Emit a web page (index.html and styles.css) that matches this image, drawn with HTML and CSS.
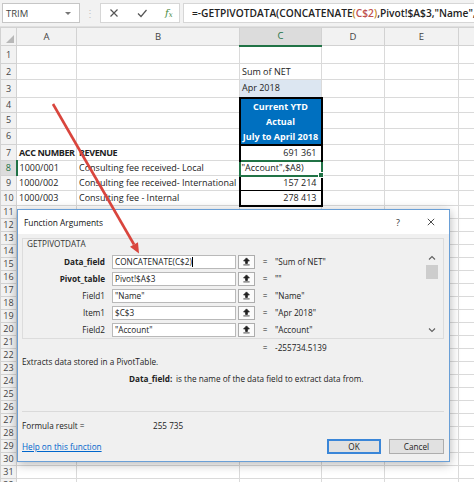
FILE: index.html
```html
<!DOCTYPE html>
<html lang="en">
<head>
  <meta charset="UTF-8" />
  <title>Function Arguments</title>
  <link rel="stylesheet" href="styles.css">
</head>
<body>
<div class="app">

  <!-- Formula bar -->
  <div class="formula-bar">
    <div class="name-box"><span>TRIM</span><span class="caret"></span></div>
    <div class="grip">⋮</div>
    <div class="fx-buttons">
      <svg class="btn-icon" viewBox="0 0 10 10"><path d="M1.5 1.5 L8.5 8.5 M8.5 1.5 L1.5 8.5"/></svg>
      <svg class="btn-icon" viewBox="0 0 10 10"><path d="M1 5.5 L4 8.5 L9.5 2"/></svg>
      <span class="fx">f<sub>x</sub></span>
    </div>
    <div class="formula">=-GETPIVOTDATA(CONCATENATE<span class="paren">(</span><span class="ref">C$2</span><span class="paren">)</span>,Pivot!$A$3,"Name",$C$3,"Account",$A8)</div>
  </div>

  <!-- Sheet -->
  <table class="sheet">
    <colgroup>
      <col class="c-rh"><col class="c-a"><col class="c-b"><col class="c-c"><col class="c-d"><col class="c-e"><col class="c-f">
    </colgroup>
    <tr class="head"><th class="corner"></th><th>A</th><th>B</th><th class="sel">C</th><th>D</th><th>E</th><th></th></tr>
    <tr class="h18"><th>1</th><td></td><td></td><td></td><td></td><td></td><td></td></tr>
    <tr class="h16"><th>2</th><td></td><td></td><td>Sum of NET</td><td></td><td></td><td></td></tr>
    <tr class="h18"><th>3</th><td></td><td></td><td class="period">Apr 2018</td><td></td><td></td><td></td></tr>
    <tr class="h15"><th>4</th><td></td><td></td><td class="title-cell" rowspan="3">Current YTD<br>Actual<br>July to April 2018</td><td></td><td></td><td></td></tr>
    <tr class="h15"><th>5</th><td></td><td></td><td></td><td></td><td></td></tr>
    <tr class="h16"><th>6</th><td></td><td></td><td></td><td></td><td></td></tr>
    <tr class="h16"><th>7</th><td class="bold">ACC NUMBER</td><td class="bold">REVENUE</td><td class="box num">691 361</td><td></td><td></td><td></td></tr>
    <tr class="h15"><th class="sel-row">8</th><td>1000/001</td><td>Consulting fee received- Local</td><td class="editing">"Account",$A8)</td><td></td><td></td><td></td></tr>
    <tr class="h15"><th>9</th><td>1000/002</td><td>Consulting fee received- International</td><td class="box num">157 214</td><td></td><td></td><td></td></tr>
    <tr class="h15"><th>10</th><td>1000/003</td><td>Consulting fee - Internal</td><td class="box box-end num">278 413</td><td></td><td></td><td></td></tr>
    <tr class="lo"><th>11</th><td></td><td></td><td></td><td></td><td></td><td></td></tr>
    <tr class="lo"><th>12</th><td></td><td></td><td></td><td></td><td></td><td></td></tr>
    <tr class="lo"><th>13</th><td></td><td></td><td></td><td></td><td></td><td></td></tr>
    <tr class="lo"><th>14</th><td></td><td></td><td></td><td></td><td></td><td></td></tr>
    <tr class="lo"><th>15</th><td></td><td></td><td></td><td></td><td></td><td></td></tr>
    <tr class="lo"><th>16</th><td></td><td></td><td></td><td></td><td></td><td></td></tr>
    <tr class="lo"><th>17</th><td></td><td></td><td></td><td></td><td></td><td></td></tr>
    <tr class="lo"><th>18</th><td></td><td></td><td></td><td></td><td></td><td></td></tr>
    <tr class="lo"><th>19</th><td></td><td></td><td></td><td></td><td></td><td></td></tr>
    <tr class="lo"><th>20</th><td></td><td></td><td></td><td></td><td></td><td></td></tr>
    <tr class="lo"><th>21</th><td></td><td></td><td></td><td></td><td></td><td></td></tr>
    <tr class="lo"><th>22</th><td></td><td></td><td></td><td></td><td></td><td></td></tr>
    <tr class="lo"><th>23</th><td></td><td></td><td></td><td></td><td></td><td></td></tr>
    <tr class="lo"><th>24</th><td></td><td></td><td></td><td></td><td></td><td></td></tr>
    <tr class="lo"><th>25</th><td></td><td></td><td></td><td></td><td></td><td></td></tr>
    <tr class="lo"><th>26</th><td></td><td></td><td></td><td></td><td></td><td></td></tr>
    <tr class="lo"><th>27</th><td></td><td></td><td></td><td></td><td></td><td></td></tr>
    <tr class="lo"><th>28</th><td></td><td></td><td></td><td></td><td></td><td></td></tr>
    <tr class="lo"><th>29</th><td></td><td></td><td></td><td></td><td></td><td></td></tr>
    <tr class="lo"><th>30</th><td></td><td></td><td></td><td></td><td></td><td></td></tr>
    <tr class="lo"><th>31</th><td></td><td></td><td></td><td></td><td></td><td></td></tr>
    <tr class="lo"><th class="last">32</th><td></td><td></td><td></td><td></td><td></td><td></td></tr>
  </table>

  <!-- Function Arguments dialog -->
  <div class="dialog">
    <div class="dialog-title">
      <span>Function Arguments</span>
      <span class="title-btns">
        <span class="help">?</span>
        <span class="close"><svg viewBox="0 0 10 10"><path d="M1 1 L9 9 M9 1 L1 9"/></svg></span>
      </span>
    </div>
    <div class="dialog-body">
      <div class="group">
        <div class="group-name">GETPIVOTDATA</div>
        <div class="group-main">
          <div class="args">
            <div class="arg">
              <label class="req">Data_field</label>
              <div class="input">CONCATENATE(C$2)<span class="cursor"></span></div>
              <span class="ref-btn"><svg viewBox="0 0 10 10"><path d="M5 1 L1.8 4.4 H4 V7.2 H6 V4.4 H8.2 Z M1.5 8.8 H8.5"/></svg></span>
              <span class="eq">=</span><span class="val">"Sum of NET"</span>
            </div>
            <div class="arg">
              <label class="req">Pivot_table</label>
              <div class="input">Pivot!$A$3</div>
              <span class="ref-btn"><svg viewBox="0 0 10 10"><path d="M5 1 L1.8 4.4 H4 V7.2 H6 V4.4 H8.2 Z M1.5 8.8 H8.5"/></svg></span>
              <span class="eq">=</span><span class="val">""</span>
            </div>
            <div class="arg">
              <label>Field1</label>
              <div class="input">"Name"</div>
              <span class="ref-btn"><svg viewBox="0 0 10 10"><path d="M5 1 L1.8 4.4 H4 V7.2 H6 V4.4 H8.2 Z M1.5 8.8 H8.5"/></svg></span>
              <span class="eq">=</span><span class="val">"Name"</span>
            </div>
            <div class="arg">
              <label>Item1</label>
              <div class="input">$C$3</div>
              <span class="ref-btn"><svg viewBox="0 0 10 10"><path d="M5 1 L1.8 4.4 H4 V7.2 H6 V4.4 H8.2 Z M1.5 8.8 H8.5"/></svg></span>
              <span class="eq">=</span><span class="val">"Apr 2018"</span>
            </div>
            <div class="arg">
              <label>Field2</label>
              <div class="input">"Account"</div>
              <span class="ref-btn"><svg viewBox="0 0 10 10"><path d="M5 1 L1.8 4.4 H4 V7.2 H6 V4.4 H8.2 Z M1.5 8.8 H8.5"/></svg></span>
              <span class="eq">=</span><span class="val">"Account"</span>
            </div>
          </div>
          <div class="scrollbar">
            <svg class="chev" viewBox="0 0 12 10"><path d="M3 6.5 L6 3.5 L9 6.5"/></svg>
            <div class="thumb"></div>
            <svg class="chev down" viewBox="0 0 12 10"><path d="M3 3.5 L6 6.5 L9 3.5"/></svg>
          </div>
        </div>
      </div>

      <div class="result-row"><span class="eq">=</span><span class="val">-255734.5139</span></div>
      <p class="desc">Extracts data stored in a PivotTable.</p>
      <p class="arg-help"><b>Data_field:</b><span>is the name of the data field to extract data from.</span></p>
      <hr>
      <div class="formula-result"><span class="fr-label">Formula result =</span><span>255 735</span></div>
      <div class="footer">
        <a href="#">Help on this function</a>
        <div class="buttons">
          <button class="ok">OK</button>
          <button>Cancel</button>
        </div>
      </div>
    </div>
  </div>

  <!-- Red annotation arrow -->
  <svg class="arrow" viewBox="0 0 474 482">
    <line x1="53" y1="104" x2="134" y2="244.5"/>
    <polygon points="139,253.5 130,246.8 138,242.2"/>
  </svg>

</div>
</body>
</html>
```

FILE: styles.css
```css
* {
  margin: 0;
  padding: 0;
  box-sizing: border-box;
}
body {
  font-family: "Open Sans", "Liberation Sans", sans-serif;
  color: #222;
  background: #fff;
  overflow: hidden;
}
.app {
  position: relative;
  width: 474px;
  height: 482px;
  overflow: hidden;
}

/* Formula bar */
.formula-bar {
  display: flex;
  align-items: flex-start;
  height: 27px;
  padding: 3px 0 0 2px;
  background: #f2f2f2;
  border-bottom: 1px solid #e0e0e0;
}
.name-box {
  display: flex;
  align-items: center;
  justify-content: space-between;
  width: 78px;
  height: 20px;
  padding: 0 8px 0 3px;
  background: #fff;
  border: 1px solid #c6c6c6;
  font-size: 9.5px;
  color: #444;
}
.caret {
  border-left: 3px solid transparent;
  border-right: 3px solid transparent;
  border-top: 3px solid #777;
}
.grip {
  width: 20px;
  height: 20px;
  line-height: 20px;
  text-align: center;
  color: #c4c4c4;
  font-size: 10px;
}
.fx-buttons {
  display: flex;
  align-items: center;
  gap: 18px;
  width: 80px;
  height: 20px;
  padding-left: 8px;
  background: #fff;
  border: 1px solid #d6d6d6;
}
.btn-icon {
  width: 10px;
  height: 10px;
  fill: none;
  stroke: #555;
  stroke-width: 1.2;
}
.fx {
  font-family: "DejaVu Serif", serif;
  font-style: italic;
  font-size: 10px;
  color: #4a8a3e;
}
.fx sub {
  font-size: 7px;
  vertical-align: -1px;
}
.formula {
  flex: 1;
  height: 20px;
  margin-left: 3px;
  padding-left: 8px;
  background: #fff;
  border: 1px solid #d6d6d6;
  border-right: none;
  font-size: 10.2px;
  font-weight: 600;
  line-height: 18px;
  white-space: nowrap;
  overflow: hidden;
}
.ref { color: #c0504d; }
.paren { color: #c4831c; }

/* Sheet */
.sheet {
  border-collapse: collapse;
  table-layout: fixed;
  width: 558px;
  font-size: 9px;
  line-height: 12px;
}
.c-rh { width: 16px; }
.c-a { width: 60px; }
.c-b { width: 163px; }
.c-c { width: 82px; }
.c-d { width: 63px; }
.c-e { width: 74px; }
.c-f { width: 100px; }

.sheet th,
.sheet td {
  border: 1px solid #dadada;
  padding: 0 2px;
  white-space: nowrap;
  font-weight: normal;
  text-align: left;
}
.sheet th {
  background: #f2f2f2;
  color: #444;
  text-align: center;
  padding: 0;
  border-color: #d2d2d2;
}
.sheet tr.head { height: 18px; }
.sheet tr.head th { font-size: 9.5px; }
.h18 { height: 18px; }
.h16 { height: 16px; }
.h15 { height: 15px; }
.lo { height: 12.71px; }
.sheet th.last { vertical-align: top; }

.sheet th.corner {
  position: relative;
}
.sheet th.corner::after {
  content: "";
  position: absolute;
  right: 2px;
  bottom: 2px;
  border-left: 8px solid transparent;
  border-bottom: 8px solid #b8b8b8;
}
.sheet th.sel {
  background: #dcdcdc;
  color: #217346;
  border-bottom: 2px solid #217346;
}
.sheet th.sel-row {
  background: #dcdcdc;
  color: #217346;
  border-right: 2px solid #217346;
}

.sheet td.bold {
  font-weight: bold;
  letter-spacing: -0.4px;
}
.sheet td.num { text-align: right; padding-right: 4px; }
.sheet td.period { background: #dce6f1; }
.sheet td.title-cell {
  background: #0070c0;
  color: #fff;
  font-weight: bold;
  text-align: center;
  line-height: 15px;
  white-space: nowrap;
  border: 2px solid #000;
}
.sheet td.box {
  border-left: 2px solid #000;
  border-right: 2px solid #000;
  border-top: 1px solid #000;
  border-bottom: 1px solid #000;
}
.sheet td.box-end { border-bottom: 2px solid #000; }
.sheet td.editing {
  position: relative;
  border: 2px solid #217346;
  padding-left: 1px;
}
.sheet td.editing::after {
  content: "";
  position: absolute;
  right: -3px;
  bottom: -3px;
  width: 4px;
  height: 4px;
  background: #217346;
  border: 1px solid #fff;
}

/* Dialog */
.dialog {
  position: absolute;
  left: 17px;
  top: 209px;
  width: 433px;
  height: 253px;
  background: #f0f0f0;
  border: 1px solid #6a9fd6;
  box-shadow: 0 2px 10px rgba(0, 0, 0, 0.3);
  font-size: 8.2px;
  color: #222;
}
.dialog-title {
  display: flex;
  justify-content: space-between;
  align-items: center;
  height: 24px;
  padding-left: 6px;
  background: #fff;
  font-size: 8.4px;
  color: #111;
}
.title-btns {
  display: flex;
  align-items: center;
}
.help {
  width: 30px;
  text-align: center;
  font-size: 9px;
  color: #333;
}
.close {
  display: flex;
  justify-content: center;
  width: 36px;
}
.close svg {
  width: 8px;
  height: 8px;
  stroke: #333;
  stroke-width: 1.1;
}
.dialog-body {
  padding: 4px 5px 7px 4px;
}
.group {
  height: 101px;
  border: 1px solid #dcdcdc;
}
.group-name {
  height: 10px;
  line-height: 10px;
  padding-left: 4px;
  color: #333;
}
.group-main {
  display: flex;
  margin-top: 4px;
}
.args {
  flex: 1;
}
.arg {
  display: flex;
  align-items: center;
  height: 17px;
}
.arg label {
  width: 82px;
  margin-right: 7px;
  text-align: right;
}
.arg label.req { font-weight: bold; }
.input {
  position: relative;
  width: 124px;
  height: 14px;
  margin-right: 2px;
  padding-left: 2px;
  background: #fff;
  border: 1px solid #b9b9b9;
  line-height: 12px;
  white-space: nowrap;
}
.cursor {
  display: inline-block;
  width: 1px;
  height: 10px;
  margin-left: 0.5px;
  background: #000;
  vertical-align: -2px;
}
.ref-btn {
  display: flex;
  align-items: center;
  justify-content: center;
  width: 17px;
  height: 14px;
  background: #fbfbfb;
  border: 1px solid #adadad;
}
.ref-btn svg {
  width: 9px;
  height: 9px;
  fill: #222;
  stroke: #222;
  stroke-width: 0.9;
}
.eq {
  width: 20px;
  text-align: center;
}
.scrollbar {
  display: flex;
  flex-direction: column;
  width: 12px;
  height: 85px;
  margin-right: 5px;
}
.chev {
  width: 12px;
  height: 10px;
  fill: none;
  stroke: #606060;
  stroke-width: 1.1;
}
.chev.down {
  margin-top: auto;
  margin-bottom: 3px;
}
.thumb {
  height: 14px;
  margin-top: 2px;
  background: #cdcdcd;
}

.result-row {
  display: flex;
  height: 12px;
  line-height: 12px;
  margin-top: 3px;
  padding-left: 233px;
}
.desc {
  margin-top: 2px;
  line-height: 12px;
}
.arg-help {
  display: flex;
  margin-top: 5px;
  padding-left: 107px;
  line-height: 12px;
}
.arg-help b {
  width: 47px;
}
hr {
  margin-top: 26px;
  border: none;
  border-top: 1px solid #dadada;
}
.formula-result {
  display: flex;
  margin-top: 8px;
  line-height: 12px;
}
.fr-label {
  width: 131px;
}
.footer {
  display: flex;
  justify-content: space-between;
  align-items: center;
  height: 15px;
  margin-top: 7px;
}
.footer a {
  color: #0066cc;
  text-decoration: underline;
}
.buttons {
  display: flex;
  gap: 8px;
}
.buttons button {
  width: 55px;
  height: 15px;
  font: inherit;
  color: #222;
  background: #e1e1e1;
  border: 1px solid #adadad;
}
.buttons button.ok {
  width: 54px;
  border: 2px solid #3a86d8;
}

/* Annotation */
.arrow {
  position: absolute;
  left: 0;
  top: 0;
  width: 474px;
  height: 482px;
  pointer-events: none;
}
.arrow line {
  stroke: #d9453d;
  stroke-width: 2.6;
}
.arrow polygon {
  fill: #d9453d;
}
```
